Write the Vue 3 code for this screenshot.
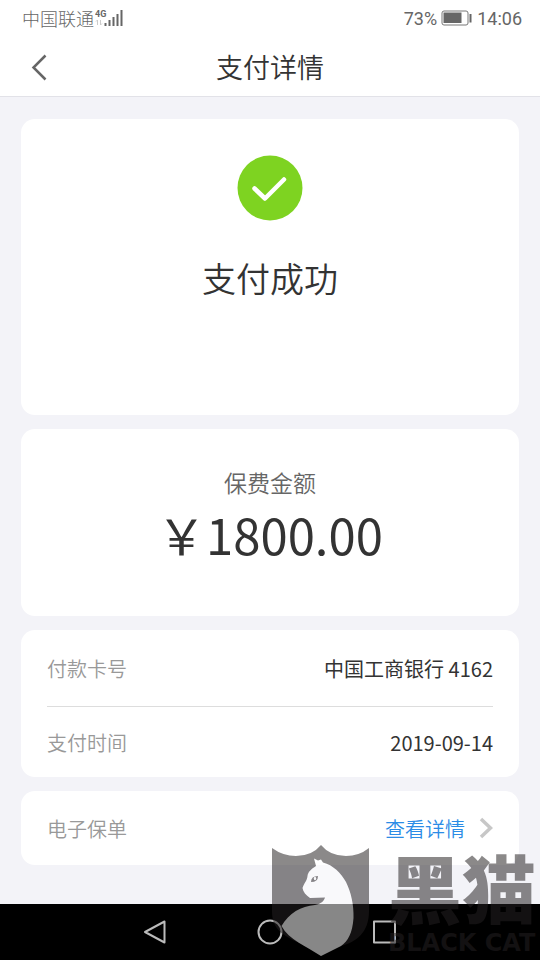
<script setup>
const payment = [
  { label: '付款卡号', value: '中国工商银行 4162' },
  { label: '支付时间', value: '2019-09-14' },
]
</script>

<template>
  <div class="screen">
    <div class="status">
      <div class="status-side">
        <span class="carrier">中国联通</span>
        <svg class="signal" width="28" height="18" viewBox="0 0 28 18" aria-hidden="true">
          <text x="0" y="8" class="network">4G</text>
          <path d="M2.500 16v-5M1 12.500l1.500-1.500M5.500 11v5M7 14.500l-1.500 1.500" class="arrows" />
          <path d="M10.500 17v-3M14.500 17v-6M18.500 17v-9M22.500 17v-12M26.500 17v-16" class="bars" />
        </svg>
      </div>
      <div class="status-side">
        <span>73%</span>
        <svg class="battery" width="32" height="16" viewBox="0 0 32 16" aria-hidden="true">
          <rect x="1" y="1" width="26" height="14" rx="2" fill="#fff" stroke="#777" />
          <rect x="2.500" y="2.500" width="18" height="10.500" fill="#666" />
          <rect x="28.500" y="4" width="2" height="8.500" fill="#666" />
        </svg>
        <span>14:06</span>
      </div>
    </div>

    <header class="header">
      <button class="back" type="button" aria-label="返回">
        <svg width="18" height="28" viewBox="0 0 18 28" aria-hidden="true">
          <path d="M15.500 2.500L3.500 14.500L15.500 26.500" fill="none" stroke="#666" stroke-width="2.500" />
        </svg>
      </button>
      <h1>支付详情</h1>
    </header>

    <main class="content">
      <section class="card result">
        <svg width="66" height="66" viewBox="0 0 66 66" aria-hidden="true">
          <circle cx="33" cy="33" r="32.500" fill="#7ed321" />
          <path d="M17.500 33.500L28 43.500L47 24.500" fill="none" stroke="#fff" stroke-width="4.500" stroke-linecap="round" stroke-linejoin="round" />
        </svg>
        <h2>支付成功</h2>
      </section>

      <section class="card premium">
        <p class="caption">保费金额</p>
        <p class="amount">￥1800.00</p>
      </section>

      <dl class="card details">
        <div v-for="row in payment" :key="row.label" class="row">
          <dt>{{ row.label }}</dt>
          <dd>{{ row.value }}</dd>
        </div>
      </dl>

      <section class="card policy">
        <span class="label">电子保单</span>
        <a href="#policy">
          查看详情
          <svg width="14" height="22" viewBox="0 0 14 22" aria-hidden="true">
            <path d="M2 2L11.500 11L2 20" fill="none" stroke="#c7c7c7" stroke-width="3.500" />
          </svg>
        </a>
      </section>
    </main>

    <nav class="system">
      <button type="button" aria-label="后退">
        <svg width="28" height="28" viewBox="0 0 28 28" aria-hidden="true">
          <path d="M23.500 3.500V24.500L4 14Z" />
        </svg>
      </button>
      <button type="button" aria-label="主屏幕">
        <svg width="28" height="28" viewBox="0 0 28 28" aria-hidden="true">
          <circle cx="14" cy="14" r="11.500" />
        </svg>
      </button>
      <button type="button" aria-label="最近任务">
        <svg width="28" height="28" viewBox="0 0 28 28" aria-hidden="true">
          <rect x="3" y="3.500" width="21" height="21" />
        </svg>
      </button>
    </nav>

    <div class="watermark">
      <svg width="98" height="112" viewBox="0 0 98 112" aria-hidden="true">
        <path d="M0 3Q11 11 24 11Q40 11 49 0Q58 11 74 11Q87 11 97 3V66C97 88 84 97 69 101L49 111L29 99C10 90 0 84 0 66Z" fill="#252122" />
        <path d="M42 13.500L46 15.500L49 14.500L51 17.500C61 20 69 28 74 37C79 47 82 60 81.500 73C80.500 88 76 96 69 101L49 111C34 101 17 95 9.500 81C17 68 29 61 43 60C49 59 52 56 53 52.500L38 53C34 50 31 47 30.500 43C32 38 35 36 35.500 31C36 27 39 24 44 21Z" fill="#fff" />
        <path d="M39 37Q39 31 46 31Q46 37 39 37Z" fill="#252122" />
        <ellipse cx="43" cy="33.500" rx="1.200" ry="1.800" fill="#fff" />
      </svg>
      <div class="wordmark">
        <span class="brand">黑猫</span>
        <span class="latin">BLACK CAT</span>
      </div>
    </div>
  </div>
</template>

<style>
body {
  margin: 0;
  background: #f3f3f8;
}
</style>

<style scoped>
.screen {
  position: relative;
  display: flex;
  flex-direction: column;
  min-height: 100vh;
  font-family: "Noto Sans CJK SC", sans-serif;
  font-weight: 350;
  color: #333;
}

h1,
h2,
p,
dl,
dd {
  margin: 0;
  font-weight: 350;
}

button {
  display: flex;
  padding: 0;
  border: 0;
  background: none;
}

.status {
  display: flex;
  justify-content: space-between;
  height: 36px;
  padding: 0 18px 0 22px;
  background: #fff;
  font-family: Roboto, "Noto Sans CJK SC", sans-serif;
  font-size: 18px;
  font-weight: 400;
  color: #666;
}

.status-side {
  display: flex;
  align-items: center;
  gap: 4px;
}

.status-side:first-child {
  gap: 1px;
}

.carrier {
  font-weight: 300;
}

.network {
  font: 700 9px Roboto, sans-serif;
  fill: #666;
}

.arrows {
  fill: none;
  stroke: #ccc;
}

.bars {
  stroke: #666;
  stroke-width: 2;
}

.header {
  display: grid;
  grid-template-columns: 1fr auto 1fr;
  align-items: center;
  padding: 11px 30px 9px;
  border-bottom: 1px solid #e2e2e8;
  background: #fff;
}

h1 {
  font-size: 27px;
  line-height: 40px;
}

.content {
  display: flex;
  flex: 1;
  flex-direction: column;
  gap: 14px;
  padding: 22px 21px 39px;
}

.card {
  border-radius: 14px;
  background: #fff;
}

.result {
  display: flex;
  flex-direction: column;
  align-items: center;
  gap: 32px;
  padding: 36px 26px 112px;
}

h2 {
  font-size: 34px;
  line-height: 50px;
}

.premium {
  padding: 36px 26px 47px;
  text-align: center;
}

.caption {
  font-size: 23px;
  line-height: 34px;
  color: #666;
}

.amount {
  font-size: 49px;
  font-weight: 400;
  line-height: 70px;
}

.details {
  padding: 0 26px;
  font-size: 20px;
}

.details dd {
  font-weight: 400;
}

.row {
  display: flex;
  align-items: center;
  justify-content: space-between;
  height: 70px;
}

.row:first-child {
  height: 76px;
  border-bottom: 1px solid #ddd;
}

dt,
.label {
  color: #999;
}

.policy {
  display: flex;
  align-items: center;
  justify-content: space-between;
  height: 74px;
  padding: 0 26px;
  font-size: 20px;
}

.policy a {
  display: flex;
  align-items: center;
  gap: 14px;
  color: #2b8ce6;
  text-decoration: none;
}

.system {
  display: flex;
  align-items: center;
  justify-content: center;
  gap: 87px;
  height: 56px;
  background: #000;
}

.system svg {
  fill: none;
  stroke: #bbb;
  stroke-width: 2;
  stroke-linejoin: round;
}

.watermark {
  position: absolute;
  right: 4px;
  bottom: 3px;
  display: flex;
  gap: 18px;
  opacity: 0.53;
  color: #252122;
  pointer-events: none;
}

.wordmark {
  display: flex;
  flex-direction: column;
  gap: 8px;
  padding-top: 6px;
}

.brand {
  font-size: 74px;
  font-weight: 900;
  line-height: 70px;
}

.latin {
  font: 700 24px/28px "DejaVu Sans", sans-serif;
  white-space: nowrap;
}
</style>
